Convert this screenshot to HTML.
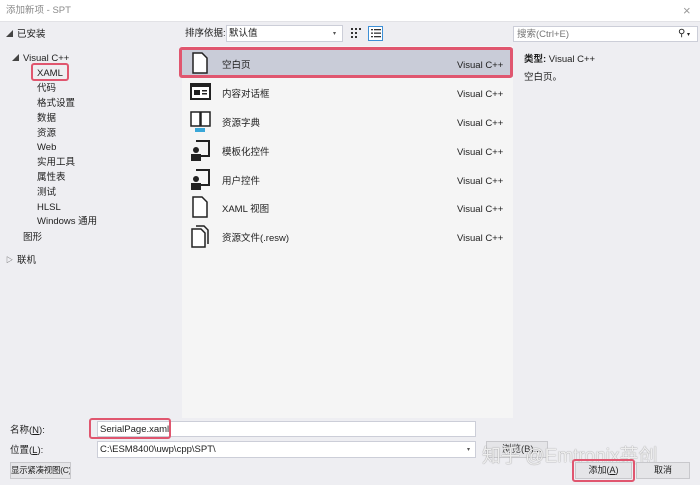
<!DOCTYPE html>
<html><head><meta charset="utf-8"><style>
*{margin:0;padding:0;box-sizing:border-box}
body{width:700px;height:485px;overflow:hidden;background:#eeeef2;font-family:"Liberation Sans","Noto Sans CJK SC",sans-serif;font-size:9.5px;line-height:16px;color:#1e1e1e;position:relative}
.a{position:absolute;white-space:nowrap;line-height:16px}
.a:not(.box):not(.btn):not(.red):not(.title):not(.left):not(.center):not(svg){margin-top:2px}
.title{left:0;top:0;width:700px;height:22px;background:#fff;border-bottom:1px solid #e2e2e6}
.left{left:0;top:22px;width:182px;height:396px;background:#eeeef2}
.center{left:182px;top:46px;width:331px;height:372px;background:#f5f5f5}
.row{position:absolute;left:182px;width:331px;height:29px;line-height:16px}
.row .n{position:absolute;left:40px;top:10px}
.row .v{position:absolute;left:275px;top:10px}
.row svg{position:absolute;left:8px;top:4px}
.box{background:#fff;border:1px solid #ccced8}
.btn{background:#e5e5e8;border:1px solid #c8c8cc;text-align:center;font-size:9px;line-height:13px}
.red{border:2px solid #e0566f;border-radius:3px}
</style></head><body>
<div class="a title"></div>
<div class="a" style="left:6px;top:1px;color:#8a8a8a;font-size:9.5px">添加新项 - SPT</div>
<div class="a" style="left:683px;top:1px;color:#999;font-size:13px">×</div>
<div class="a left"></div>
<div class="a" style="left:6px;top:25px;font-size:7px;color:#444">◢</div>
<div class="a" style="left:17px;top:25px">已安装</div>
<div class="a" style="left:12px;top:49px;font-size:7px;color:#444">◢</div>
<div class="a" style="left:23px;top:49px">Visual C++</div>
<div class="a red" style="left:31px;top:63px;width:38px;height:18px"></div>
<div class="a" style="left:37px;top:64px">XAML</div>
<div class="a" style="left:37px;top:79px">代码</div>
<div class="a" style="left:37px;top:94px">格式设置</div>
<div class="a" style="left:37px;top:109px">数据</div>
<div class="a" style="left:37px;top:124px">资源</div>
<div class="a" style="left:37px;top:138px">Web</div>
<div class="a" style="left:37px;top:153px">实用工具</div>
<div class="a" style="left:37px;top:168px">属性表</div>
<div class="a" style="left:37px;top:183px">测试</div>
<div class="a" style="left:37px;top:198px">HLSL</div>
<div class="a" style="left:37px;top:212px">Windows 通用</div>
<div class="a" style="left:23px;top:228px">图形</div>
<div class="a" style="left:6px;top:251px;font-size:7px;color:#444">▷</div>
<div class="a" style="left:17px;top:251px">联机</div>

<div class="a" style="left:185px;top:24px">排序依据:</div>
<div class="a box" style="left:226px;top:25px;width:117px;height:17px"></div>
<div class="a" style="left:229px;top:24px">默认值</div>
<div class="a" style="left:333px;top:24px;font-size:6px;color:#555">▾</div>
<svg class="a" style="left:351px;top:28px" width="10" height="11"><g fill="#333"><rect x="0" y="0" width="2" height="2"/><rect x="4" y="0" width="2" height="2"/><rect x="8" y="0" width="2" height="2"/><rect x="0" y="4" width="2" height="2"/><rect x="4" y="4" width="2" height="2"/><rect x="0" y="8" width="2" height="2"/><rect x="4" y="8" width="2" height="2"/></g></svg>
<div class="a" style="left:368px;top:26px;width:15px;height:15px;border:1px solid #3d8fd6;background:#fff;margin-top:0"></div>
<svg class="a" style="left:371px;top:29px" width="10" height="9"><g fill="#333"><rect x="0" y="0" width="2" height="1.3"/><rect x="3" y="0" width="7" height="1.3"/><rect x="0" y="3.5" width="2" height="1.3"/><rect x="3" y="3.5" width="7" height="1.3"/><rect x="0" y="7" width="2" height="1.3"/><rect x="3" y="7" width="7" height="1.3"/></g></svg>
<div class="a box" style="left:513px;top:26px;width:185px;height:16px"></div>
<div class="a" style="left:517px;top:25px;color:#777">搜索(Ctrl+E)</div>
<div class="a" style="left:678px;top:24px;font-size:10px;color:#222">⚲<span style="font-size:6px"> ▾</span></div>

<div class="a center"></div>
<div class="row" style="top:48px;background:#c9ccd8"></div>
<div class="a red" style="left:179px;top:47px;width:334px;height:31px;border-width:3px"></div>
<div class="row" style="top:48px"><svg width="20" height="22"><path d="M3 1h9l5 5v15H3z" fill="#fff" stroke="#222" stroke-width="1.5"/></svg><span class="n">空白页</span><span class="v">Visual C++</span></div>
<div class="row" style="top:77px"><svg width="22" height="22"><rect x="1" y="3" width="19" height="15" fill="#fff" stroke="#222" stroke-width="2"/><rect x="1" y="3" width="19" height="3" fill="#222"/><rect x="4" y="9" width="6" height="5" fill="#222"/><rect x="12" y="9" width="5" height="1.5" fill="#222"/><rect x="12" y="12" width="5" height="1.5" fill="#222"/></svg><span class="n">内容对话框</span><span class="v">Visual C++</span></div>
<div class="row" style="top:106px"><svg width="22" height="24"><path d="M1 2h9v14H1zM11 2h9v14h-9z" fill="#fff" stroke="#222" stroke-width="1.5"/><rect x="5" y="18" width="10" height="4" fill="#3aa7d8"/></svg><span class="n">资源字典</span><span class="v">Visual C++</span></div>
<div class="row" style="top:135px"><svg width="22" height="24"><path d="M6 2h13v15h-8" fill="none" stroke="#222" stroke-width="2"/><circle cx="6" cy="11" r="3" fill="#222"/><rect x="1" y="15" width="10" height="7" fill="#222"/></svg><span class="n">模板化控件</span><span class="v">Visual C++</span></div>
<div class="row" style="top:164px"><svg width="22" height="24"><path d="M6 2h13v15h-8" fill="none" stroke="#222" stroke-width="2"/><circle cx="6" cy="11" r="3" fill="#222"/><rect x="1" y="15" width="10" height="7" fill="#222"/></svg><span class="n">用户控件</span><span class="v">Visual C++</span></div>
<div class="row" style="top:192px"><svg width="20" height="22"><path d="M3 1h9l5 5v15H3z" fill="#fff" stroke="#222" stroke-width="1.5"/></svg><span class="n">XAML 视图</span><span class="v">Visual C++</span></div>
<div class="row" style="top:221px"><svg width="22" height="24"><path d="M6 1h8l4 4v14" fill="none" stroke="#222" stroke-width="1.5"/><path d="M2 4h9l4 4v14H2z" fill="#fff" stroke="#222" stroke-width="1.5"/></svg><span class="n">资源文件(.resw)</span><span class="v">Visual C++</span></div>

<div class="a" style="left:524px;top:50px"><b>类型:</b> Visual C++</div>
<div class="a" style="left:524px;top:68px">空白页。</div>

<div class="a" style="left:10px;top:421px">名称(<u>N</u>):</div>
<div class="a box" style="left:97px;top:421px;width:379px;height:16px"></div>
<div class="a red" style="left:89px;top:418px;width:82px;height:21px"></div>
<div class="a" style="left:100px;top:420px">SerialPage.xaml</div>
<div class="a" style="left:10px;top:441px">位置(<u>L</u>):</div>
<div class="a box" style="left:97px;top:441px;width:379px;height:17px"></div>
<div class="a" style="left:100px;top:440px">C:\ESM8400\uwp\cpp\SPT\</div>
<div class="a" style="left:467px;top:440px;font-size:6px;color:#555">▾</div>
<div class="a btn" style="left:486px;top:441px;width:62px;height:17px"></div>
<div class="a" style="left:502px;top:440px;color:#333">浏览(B)...</div>
<div class="a btn" style="left:10px;top:462px;width:61px;height:17px;padding-top:1px;font-size:8.5px;letter-spacing:-0.3px;overflow:hidden">显示紧凑视图(C)</div>
<div class="a" style="left:482px;top:444px;font-size:19px;line-height:22px;color:rgba(250,250,250,.9);text-shadow:0 0 1px #666">知乎 @Emtronix英创</div>
<div class="a btn" style="left:575px;top:462px;width:57px;height:17px;padding-top:1px">添加(<u>A</u>)</div>
<div class="a red" style="left:572px;top:459px;width:63px;height:23px"></div>
<div class="a btn" style="left:636px;top:462px;width:54px;height:17px;padding-top:1px">取消</div>
</body></html>
